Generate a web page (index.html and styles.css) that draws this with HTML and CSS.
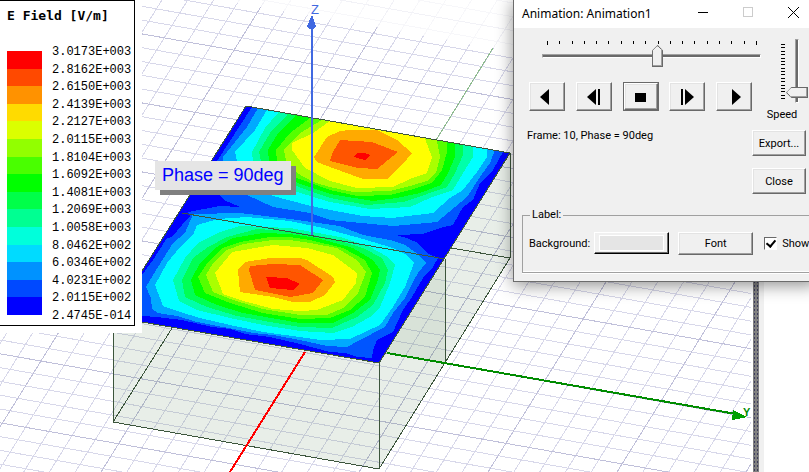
FILE: index.html
```html
<!DOCTYPE html>
<html lang="en">
  <head>
    <meta charset="utf-8">
    <meta name="viewport" content="width=device-width, initial-scale=1.0">
    <title>E Field Animation</title>
    <link rel="stylesheet" href="styles.css">
  </head>

  <body>
    <main class="workspace">
      <section class="view">
        <svg class="scene" shape-rendering="crispEdges">
          <defs>
            <clipPath id="gridArea">
              <polygon points="0,-40 142,-14 900,120 900,900 0,900"/>
            </clipPath>
            <clipPath id="plane">
              <polygon points="246,106 510,153 379,363 113,317"/>
            </clipPath>
          </defs>

          <g id="farGrid" class="far-grid"></g>
          <g id="grid" clip-path="url(#gridArea)"></g>
          <line x1="493" y1="48" x2="428" y2="153" stroke="#8fbc8f"/>

          <!-- Air box -->
          <polygon points="113,317 113,422 379,469 510,258 510,153" fill="#225522" fill-opacity="0.1"/>
          <polygon points="379,363 445,259 445,363 387,353" fill="#225522" fill-opacity="0.08"/>
          <g class="box-edge">
            <path d="M113 317V422L379 469L510 258V153M113 422L174 325M379 363V469M445 259V363M451 248L510 258"/>
          </g>

          <!-- Field contours -->
          <g clip-path="url(#plane)">
            <rect x="100" y="100" width="420" height="270" fill="#0000ff"/>
            <polygon fill="#0055ff" points="252,100 252,107 217,161 213,185 220,195 224,200 240,207 220,206 188,212 190,216 182,225 172,237 167,238 153,260 142,275 136,300 142,316 157,317 182,320 212,327 230,329 245,334 270,337 300,344 330,352 345,353 358,357 372,358 373,350 377,340 393,332 403,310 412,297 423,278 433,267 438,258 427,253 418,243 407,238 396,235 423,234 440,228 453,225 463,207 473,200 480,183 493,170 503,152 503,100"/>

            <g>
              <polygon fill="#00aaff" points="258,100 258,108 247,127 223,157 222,175 247,195 273,207 310,213 330,220 393,226 437,222 455,207 467,197 480,177 490,163 495,150 495,100"/>
              <polygon fill="#00ffff" points="267,100 267,110 255,130 235,152 237,161 250,184 273,196 307,205 330,210 363,216 392,218 433,213 450,198 463,190 477,172 487,157 487,100"/>
              <polygon fill="#00ffaa" points="278,100 278,113 265,128 252,152 253,161 270,180 297,192 330,202 370,209 410,207 430,198 453,190 463,173 473,157 473,100"/>
              <polygon fill="#00ff55" points="287,100 287,115 270,133 259,152 261,161 280,180 307,190 330,198 367,205 403,202 427,194 447,187 455,173 463,155 464,100"/>
              <polygon fill="#00ff00" points="295,100 295,116 278,133 268,150 269,161 285,177 300,184 330,194 373,201 397,198 420,193 441,185 448,173 455,157 456,100"/>
              <polygon fill="#55ff00" points="310,100 310,118 290,133 276,150 277,161 297,178 330,190 357,196 390,195 410,190 432,183 442,170 447,152 447,100"/>
              <polygon fill="#aaff00" points="322,100 322,120 300,133 284,150 286,161 297,173 313,182 330,187 353,192 390,191 410,186 427,181 436,173 440,157 437,141 437,100"/>
              <polygon fill="#ffff00" points="330,100 330,121 313,133 292,143 292,150 305,168 330,181 357,188 393,187 410,179 427,173 432,157 425,139 410,100"/>
              <polygon fill="#ffaa00" points="327,137 340,131 350,130 377,130 397,140 412,153 402,165 387,179 363,179 330,167 317,162 314,157"/>
              <polygon fill="#ff5500" points="340,140 372,142 398,152 377,169 358,168 330,161 333,152"/>
              <polygon fill="#ff0000" points="358,153 365,153 370,155 365,160 354,157 355,155"/>
            </g>

            <g>
              <polygon fill="#00aaff" points="193,214 185,233 173,243 158,267 146,287 151,298 152,309 158,313 177,316 197,322 223,327 253,333 273,335 300,340 327,346 347,347 360,340 385,327 393,313 405,298 413,282 418,273 426,263 415,252 405,245 390,240 363,235 340,226 290,219 240,213"/>
              <polygon fill="#00ffff" points="218,219 197,225 193,235 180,247 167,263 155,285 163,306 180,312 200,318 230,325 263,332 300,337 320,340 350,339 365,332 380,325 393,307 405,287 414,263 407,255 393,248 363,239 323,228 290,221 247,217"/>
              <polygon fill="#00ffaa" points="240,226 220,232 198,243 185,258 173,280 179,301 197,310 230,318 263,325 300,331 333,333 352,327 370,317 380,307 390,283 395,265 388,257 370,247 340,237 290,228"/>
              <polygon fill="#00ff55" points="257,229 227,237 208,247 193,258 182,280 185,297 207,307 237,316 270,322 300,327 332,328 357,317 373,305 385,283 388,270 382,258 363,248 330,238 290,231"/>
              <polygon fill="#00ff00" points="263,233 233,238 215,248 200,263 191,280 195,295 217,305 243,313 277,319 300,323 333,323 353,313 370,300 378,280 380,270 373,260 353,248 317,238 290,234"/>
              <polygon fill="#55ff00" points="270,237 240,242 222,248 208,262 198,277 205,293 230,303 263,313 300,319 330,318 350,310 365,297 372,273 365,260 343,248 310,240 290,237"/>
              <polygon fill="#aaff00" points="273,240 243,244 227,250 213,263 206,275 213,292 233,300 263,309 300,315 327,315 343,308 358,293 366,272 357,260 337,248 310,243 290,240"/>
              <polygon fill="#ffff00" points="273,245 232,252 215,273 223,294 240,300 273,309 300,311 317,310 343,300 356,283 357,273 333,255 307,248"/>
              <polygon fill="#ffaa00" points="245,262 270,258 300,258 307,260 333,277 335,282 325,295 310,302 293,302 273,297 240,292 238,270"/>
              <polygon fill="#ff5500" points="250,266 273,264 300,265 323,280 313,293 290,297 255,290 249,270"/>
              <polygon fill="#ff0000" points="266,277 287,278 300,284 293,290 270,288"/>
            </g>
          </g>
          <g class="box-edge">
            <polygon points="246,106 510,153 379,363 113,317"/>
            <path d="M182 213L445 259"/>
          </g>

          <!-- Axes -->
          <line x1="305" y1="352" x2="230" y2="472" stroke="#ff0000" stroke-width="2"/>
          <line x1="387" y1="353" x2="736" y2="414" stroke="#008c00" stroke-width="2"/>
          <polygon points="733,410 747,417 732,420" fill="#00a000"/>
          <line x1="312" y1="24" x2="312" y2="235" stroke="#4169e1" stroke-width="2"/>
          <polygon points="312,15 316,26 314,29 309,29 307,26" fill="#4169e1"/>
          <text x="311" y="14" class="axis-z">Z</text>
          <text x="743" y="416" class="axis-y">Y</text>
        </svg>

        <div class="legend-area">
          <div class="legend">
            <h1>E Field [V/m]</h1>
            <div class="scale">
              <div class="colors">
                <i class="c1"></i><i class="c2"></i><i class="c3"></i><i class="c4"></i><i class="c5"></i>
                <i class="c6"></i><i class="c7"></i><i class="c8"></i><i class="c9"></i><i class="c10"></i>
                <i class="c11"></i><i class="c12"></i><i class="c13"></i><i class="c14"></i><i class="c15"></i>
              </div>
              <ul class="values">
                <li>3.0173E+003</li>
                <li>2.8162E+003</li>
                <li>2.6150E+003</li>
                <li>2.4139E+003</li>
                <li>2.2127E+003</li>
                <li>2.0115E+003</li>
                <li>1.8104E+003</li>
                <li>1.6092E+003</li>
                <li>1.4081E+003</li>
                <li>1.2069E+003</li>
                <li>1.0058E+003</li>
                <li>8.0462E+002</li>
                <li>6.0346E+002</li>
                <li>4.0231E+002</li>
                <li>2.0115E+002</li>
                <li>2.4745E-014</li>
              </ul>
            </div>
          </div>
        </div>

        <div class="phase-label">Phase = 90deg</div>
      </section>
      <div class="splitter"></div>
      <aside class="side-panel"></aside>
    </main>

    <div class="dialog" role="dialog" aria-labelledby="dialogTitle">
      <div class="title-bar">
        <h2 id="dialogTitle">Animation: Animation1</h2>
        <button class="win-button" aria-label="Minimize">
          <svg width="11" height="11"><path d="M0 5H10V6H0Z"/></svg>
        </button>
        <button class="win-button" aria-label="Maximize" disabled>
          <svg width="11" height="11"><path d="M0 0H10V10H0ZM1 1V9H9V1Z" fill="#ccc" fill-rule="evenodd"/></svg>
        </button>
        <button class="win-button" aria-label="Close window">
          <svg width="11" height="11"><path d="M0 0L11 11M11 0L0 11" stroke="#000"/></svg>
        </button>
      </div>

      <div class="dialog-body">
        <div class="playback">
          <div class="frame-ticks" id="frameTicks"></div>
          <input type="range" class="frame-slider" min="1" max="18" value="10" aria-label="Frame">
          <div class="transport">
            <button class="btn" aria-label="Play backward">
              <svg width="20" height="18"><path d="M12 1V17L3 9Z"/></svg>
            </button>
            <button class="btn" aria-label="Step backward">
              <svg width="20" height="18"><path d="M12 1V17L3 9ZM14 1H16V17H14Z"/></svg>
            </button>
            <button class="btn active" aria-label="Stop">
              <svg width="20" height="18"><path d="M4 5H15V14H4Z"/></svg>
            </button>
            <button class="btn" aria-label="Step forward">
              <svg width="20" height="18"><path d="M8 1V17L17 9ZM4 1H6V17H4Z"/></svg>
            </button>
            <button class="btn" aria-label="Play forward">
              <svg width="20" height="18"><path d="M8 1V17L17 9Z"/></svg>
            </button>
          </div>
          <p>Frame: 10, Phase = 90deg</p>
        </div>

        <div class="actions">
          <div class="speed">
            <div class="speed-ticks" id="speedTicks"></div>
            <input type="range" class="speed-slider" id="speed" min="0" max="100" value="8">
          </div>
          <label for="speed">Speed</label>
          <button class="btn">Export...</button>
          <button class="btn">Close</button>
        </div>
      </div>

      <fieldset>
        <legend>Label:</legend>
        <label for="background">Background:</label>
        <button class="color-button" id="background"><span></span></button>
        <button class="btn font-button">Font</button>
        <label class="show"><input type="checkbox" checked>Show</label>
      </fieldset>
    </div>

    <script src="scene.js"></script>
  </body>
</html>
```
FILE: styles.css
```css
* {
  margin: 0;
  padding: 0;
  box-sizing: border-box;
}

body {
  height: 100vh;
  overflow: hidden;
  font-family: "Liberation Sans", Arial, sans-serif;
  font-size: 12px;
  color: #000;
  background-color: #fff;
}

/* Workspace => 3D view, splitter, side panel */
.workspace {
  display: flex;
  height: 100%;
}
.view {
  position: relative;
  flex: 1;
  overflow: hidden;
}
.scene {
  display: block;
  width: 100%;
  height: 100%;
}
.splitter {
  width: 6px;
  margin-left: 2px;
  background-color: #808080;
  background-image: radial-gradient(#3c3c5c 1px, transparent 1px);
  background-size: 3px 4px;
}
.side-panel {
  width: 50px;
  border-left: 5px solid #f0f0f0;
}

.minor {
  stroke: #d8d8ea;
}
.major {
  stroke: #c0c0da;
}
.far-grid {
  opacity: 0.2;
}
.box-edge {
  fill: none;
  stroke: #3c553c;
}
.axis-z {
  font-size: 13px;
  fill: #4169e1;
}
.axis-y {
  font-size: 11px;
  font-weight: bold;
  fill: #008c00;
}

/* Legend */
.legend-area {
  position: absolute;
  top: 0;
  left: 0;
  padding: 0 7px 7px 0;
  background-color: #fff;
}
.legend {
  width: 135px;
  padding: 7px 0 1px 7px;
  border: 1px solid #000;
  border-left: none;
}
.legend h1 {
  font-family: "DejaVu Sans Mono", monospace;
  font-size: 13px;
  line-height: 16px;
  white-space: nowrap;
}
.scale {
  display: flex;
  gap: 10px;
  margin-top: 20px;
}
.colors {
  display: flex;
  flex-direction: column;
  width: 35px;
  margin: 7px 0 9px;
}
.colors i {
  flex: 1;
}
.values {
  display: flex;
  flex-direction: column;
  justify-content: space-between;
  height: 280px;
  list-style: none;
  font-family: "Liberation Mono", monospace;
  font-size: 12px;
  line-height: 16px;
}
.c1 { background-color: #ff0000; }
.c2 { background-color: #ff4900; }
.c3 { background-color: #ff9200; }
.c4 { background-color: #ffdb00; }
.c5 { background-color: #dbff00; }
.c6 { background-color: #92ff00; }
.c7 { background-color: #49ff00; }
.c8 { background-color: #00ff00; }
.c9 { background-color: #00ff49; }
.c10 { background-color: #00ff92; }
.c11 { background-color: #00ffdb; }
.c12 { background-color: #00dbff; }
.c13 { background-color: #0092ff; }
.c14 { background-color: #0049ff; }
.c15 { background-color: #0000ff; }

.phase-label {
  position: absolute;
  top: 161px;
  left: 155px;
  padding: 0 7px;
  font-size: 18px;
  line-height: 29px;
  color: #0000ff;
  background-color: #e5e5e5;
  box-shadow: 5px 5px 0 #808080;
}

/* Animation dialog */
.dialog {
  position: absolute;
  top: -1px;
  left: 513px;
  width: 304px;
  border: 1px solid #6c6c6c;
  background-color: #f0f0f0;
  box-shadow: 0 3px 16px rgba(0, 0, 0, 0.45);
  font-family: Roboto, Arial, sans-serif;
  font-size: 11px;
}
.title-bar {
  display: flex;
  align-items: center;
  height: 28px;
  padding-left: 8px;
  background-color: #fff;
}
.title-bar h2 {
  flex: 1;
  font-family: "Noto Sans", sans-serif;
  font-size: 12px;
  font-weight: normal;
  line-height: 24px;
}
.win-button {
  display: flex;
  align-items: center;
  justify-content: center;
  width: 45px;
  height: 24px;
  margin-bottom: 4px;
  border: none;
  background: none;
}

.dialog-body {
  display: flex;
  justify-content: space-between;
  padding: 11px 10px 0 15px;
}
.playback {
  width: 223px;
}
.frame-ticks {
  display: flex;
  justify-content: space-between;
  margin: 2px 0 0 18px;
  width: 210px;
}
.frame-ticks i {
  width: 1px;
  height: 3px;
  background-color: #000;
}
.frame-ticks i:first-child,
.frame-ticks i:last-child {
  height: 4px;
}

input[type="range"] {
  appearance: none;
  display: block;
  background: transparent;
}
.frame-slider {
  width: 219px;
  height: 22px;
  margin-left: 13px;
}
.frame-slider::-webkit-slider-runnable-track {
  height: 4px;
  border: 1px solid;
  border-color: #a0a0a0 #fff #fff #a0a0a0;
  background-color: #696969;
}
.frame-slider::-webkit-slider-thumb {
  appearance: none;
  width: 11px;
  height: 22px;
  margin-top: -10px;
  border: 1px solid #696969;
  border-top: none;
  background:
    linear-gradient(to bottom right, #808080 50%, transparent 54%) left top / 6px 5px no-repeat,
    linear-gradient(to bottom left, #606060 50%, transparent 54%) right top / 5px 5px no-repeat,
    #f0f0f0;
  box-shadow: inset -1px -1px 0 #a0a0a0;
  clip-path: polygon(50% 0, 100% 25%, 100% 100%, 0 100%, 0 25%);
}

.btn {
  border: 1px solid;
  border-color: #fff #696969 #696969 #fff;
  background-color: #f0f0f0;
  box-shadow: inset -1px -1px 0 #a0a0a0, inset 1px 1px 0 #e3e3e3;
  color: #000;
  font: 11px Roboto, Arial, sans-serif;
}
.transport {
  display: flex;
  justify-content: space-between;
  width: 223px;
  margin-top: 15px;
}
.transport .btn {
  display: flex;
  align-items: center;
  justify-content: center;
  width: 36px;
  height: 29px;
}
.transport .active {
  outline: 1px solid #696969;
  outline-offset: -1px;
  border: 2px solid;
  border-color: #fff #696969 #696969 #fff;
}
.playback p {
  margin: 18px 0 0 -2px;
  line-height: 14px;
}

.actions {
  display: flex;
  flex-direction: column;
  align-items: center;
  width: 54px;
}
.actions .btn {
  width: 54px;
  height: 26px;
  margin-bottom: 12px;
}
.actions label {
  margin: 5px 0 8px 6px;
  line-height: 14px;
}
.speed {
  display: flex;
  align-self: flex-end;
  margin-right: -2px;
}
.speed-ticks {
  display: flex;
  flex-direction: column;
  justify-content: space-between;
  height: 55px;
  margin: 5px 1px 0 0;
}
.speed-ticks i {
  width: 4px;
  height: 1px;
  background-color: #000;
}
.speed-slider {
  writing-mode: vertical-lr;
  direction: rtl;
  width: 22px;
  height: 64px;
}
.speed-slider::-webkit-slider-runnable-track {
  width: 4px;
  border: 1px solid;
  border-color: #a0a0a0 #fff #fff #a0a0a0;
  background-color: #696969;
}
.speed-slider::-webkit-slider-thumb {
  appearance: none;
  width: 22px;
  height: 11px;
  margin-left: -10px;
  border: 1px solid #696969;
  border-left: none;
  background:
    linear-gradient(to bottom right, #a0a0a0 50%, transparent 54%) left top / 5px 6px no-repeat,
    linear-gradient(to top right, #606060 50%, transparent 54%) left bottom / 5px 5px no-repeat,
    #f0f0f0;
  box-shadow: inset -1px -1px 0 #a0a0a0;
  clip-path: polygon(0 50%, 25% 0, 100% 0, 100% 100%, 25% 100%);
}

fieldset {
  display: flex;
  align-items: center;
  height: 65px;
  margin: 2px 0 8px 8px;
  padding: 0 0 8px 6px;
  border: 1px solid #a0a0a0;
  box-shadow: inset -1px -1px 0 #fff, 0 1px 0 #fff;
}
fieldset legend {
  margin-left: 1px;
  padding: 0 2px;
  line-height: 14px;
}
.color-button {
  width: 75px;
  height: 22px;
  margin-left: 4px;
  padding: 2px 4px;
  border: 1px solid;
  border-color: #fff #000 #000 #fff;
  background-color: #f0f0f0;
  box-shadow: inset -1px -1px 0 #696969;
}
.color-button span {
  display: block;
  height: 16px;
  border: 1px solid #fff;
  background-color: #e5e5e5;
}
.font-button {
  width: 75px;
  height: 23px;
  margin-left: 9px;
}
.show {
  display: flex;
  align-items: center;
  gap: 5px;
  margin-left: 11px;
}
.show input {
  appearance: none;
  width: 13px;
  height: 13px;
  border: 1px solid;
  border-color: #696969 #fff #fff #696969;
  background-color: #fff;
}
.show input:checked::before {
  content: "";
  display: block;
  width: 4px;
  height: 7px;
  margin: 0 0 0 3px;
  border: solid #000;
  border-width: 0 2px 2px 0;
  transform: rotate(40deg);
}
```
FILE: scene.js
```js
// Ground grid: both line families run through the model origin
const origin = { x: 312, y: 340 };
const alongY = 0.177;  // dy / dx
const alongX = -0.621; // dx / dy
const rowStep = 13.8;
const colStep = 25.8;

function addLine(group, x1, y1, x2, y2, major) {
  const line = document.createElementNS("http://www.w3.org/2000/svg", "line");
  line.setAttribute("x1", x1);
  line.setAttribute("y1", y1);
  line.setAttribute("x2", x2);
  line.setAttribute("y2", y2);
  line.setAttribute("class", major ? "major" : "minor");
  group.appendChild(line);
}

function drawGrid(group) {
  for (let pass = 0; pass < 2; pass++) {
    for (let i = -40; i <= 40; i++) {
      const major = i % 5 === 0;
      if (major !== (pass === 1)) continue;
      const y = origin.y + i * rowStep;
      addLine(group, 0, y - origin.x * alongY, 1600, y + (1600 - origin.x) * alongY, major);
      const x = origin.x + i * colStep;
      addLine(group, x - origin.y * alongX, 0, x + (1000 - origin.y) * alongX, 1000, major);
    }
  }
}

function addTicks(id, count) {
  const box = document.getElementById(id);
  for (let i = 0; i < count; i++) {
    box.appendChild(document.createElement("i"));
  }
}

drawGrid(document.getElementById("farGrid"));
drawGrid(document.getElementById("grid"));
addTicks("frameTicks", 18);
addTicks("speedTicks", 17);
```
